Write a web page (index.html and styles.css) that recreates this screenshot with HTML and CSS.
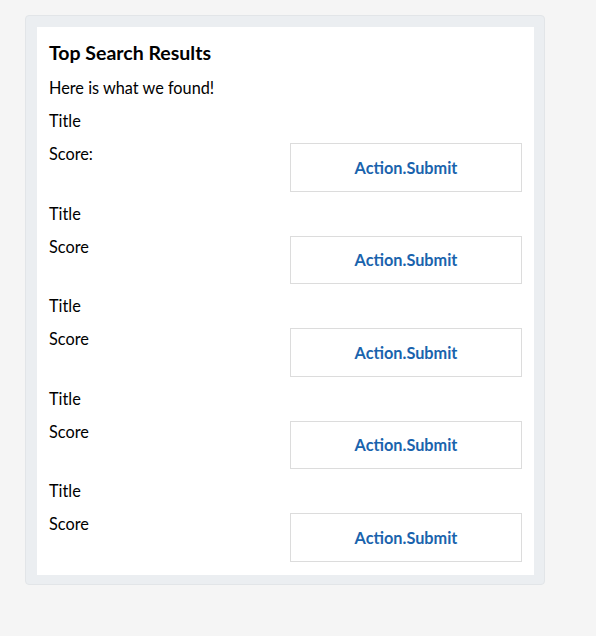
FILE: index.html
```html
<!DOCTYPE html>
<html>
<head>
<meta charset="utf-8">
<link rel="stylesheet" href="styles.css">
</head>
<body>
<div class="frame">
  <div class="card">
    <div class="heading">Top Search Results</div>
    <div class="text">Here is what we found!</div>
    <div class="text">Title</div>
    <div class="row">
      <div class="col"><div class="text">Score:</div></div>
      <div class="col"><button class="btn">Action.Submit</button></div>
    </div>
    <div class="text">Title</div>
    <div class="row">
      <div class="col"><div class="text">Score</div></div>
      <div class="col"><button class="btn">Action.Submit</button></div>
    </div>
    <div class="text">Title</div>
    <div class="row">
      <div class="col"><div class="text">Score</div></div>
      <div class="col"><button class="btn">Action.Submit</button></div>
    </div>
    <div class="text">Title</div>
    <div class="row">
      <div class="col"><div class="text">Score</div></div>
      <div class="col"><button class="btn">Action.Submit</button></div>
    </div>
    <div class="text">Title</div>
    <div class="row">
      <div class="col"><div class="text">Score</div></div>
      <div class="col"><button class="btn">Action.Submit</button></div>
    </div>
  </div>
</div>
</body>
</html>
```

FILE: styles.css
```css
html, body {
  margin: 0;
  padding: 0;
  background: #f5f5f5;
}
body {
  padding: 15px 0 0 25px;
  font-family: Lato, "Open Sans", sans-serif;
  color: #000;
}
.frame {
  width: 497px;
  padding: 11px 10px 9px 11px;
  background: #ebeef1;
  border: 1px solid #e2e5e8;
  border-radius: 4px;
}
.card {
  background: #fff;
  padding: 12px 12px 13px 12px;
  display: flex;
  flex-direction: column;
  gap: 11px;
}
.heading {
  font-size: 19.5px;
  font-weight: 700;
  line-height: 26px;
  margin-top: 1px;
}
.text {
  font-size: 16.3px;
  line-height: 22px;
}
.row {
  display: flex;
  gap: 9px;
}
.col {
  flex: 1 1 0;
  min-width: 0;
}
.btn {
  display: block;
  width: 100%;
  height: 48.5px;
  background: #fff;
  border: 1px solid #dcdcdc;
  color: #1a63ad;
  font-family: Lato, "Open Sans", sans-serif;
  font-size: 16.3px;
  font-weight: 700;
  padding: 0;
  margin: 0;
  cursor: pointer;
}
```
